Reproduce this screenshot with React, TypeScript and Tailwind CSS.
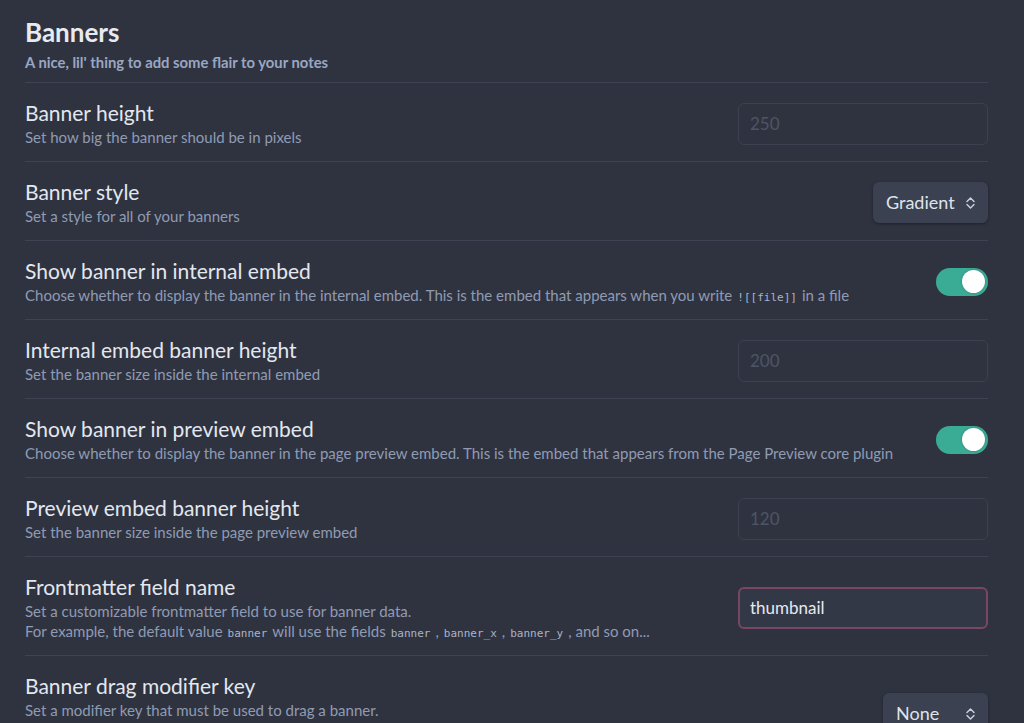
import React from "react";

const font = { fontFamily: "Lato, 'Noto Sans', sans-serif" };

function Code({ children }: { children: React.ReactNode }) {
  return (
    <code className="mx-[5px] text-[11px] leading-[0] align-baseline text-[#a9b4c9]" style={{ fontFamily: "'DejaVu Sans Mono', monospace" }}>
      {children}
    </code>
  );
}

function Row({
  title,
  desc,
  control,
  last,
  align = "center",
}: {
  title: string;
  desc: React.ReactNode;
  control: React.ReactNode;
  last?: boolean;
  align?: "center" | "start";
}) {
  return (
    <div
      className={`flex ${align === "center" ? "items-center" : "items-start"} justify-between pt-[17px] pb-[14px] ${
        last ? "" : "border-b border-[#3d4352]"
      }`}
    >
      <div className="flex flex-col">
        <div className="text-[21px] leading-[26px] text-[#e3e7ef]">{title}</div>
        <div className="text-[15px] leading-[20px] text-[#8f9bb3] mt-[1px]">{desc}</div>
      </div>
      <div className="shrink-0 ml-6">{control}</div>
    </div>
  );
}

function TextInput({ placeholder, value, focused }: { placeholder?: string; value?: string; focused?: boolean }) {
  return (
    <div
      className={`w-[250px] h-[42px] rounded-[6px] flex items-center text-[17px] ${
        focused
          ? "border-2 border-[#7b4566] bg-[#333846] text-[#e6e9ef] px-[10px]"
          : "border border-[#3b4150] text-[#4e5566] px-[11px]"
      }`}
    >
      {value ?? placeholder}
    </div>
  );
}

function Select({ label, w }: { label: string; w: string }) {
  return (
    <div
      className={`${w} h-[41px] rounded-[6px] bg-[#3b4151] shadow-[0_1px_3px_rgba(0,0,0,0.35)] flex items-center justify-between pl-[13px] pr-[12px] text-[18px] text-[#dfe3ea]`}
    >
      <span>{label}</span>
      <svg width="11" height="14" viewBox="0 0 11 14" fill="none" stroke="#c9ced8" strokeWidth="1.5" strokeLinecap="round" strokeLinejoin="round">
        <path d="M2 5.5 L5.5 2 L9 5.5" />
        <path d="M2 8.5 L5.5 12 L9 8.5" />
      </svg>
    </div>
  );
}

function Toggle() {
  return (
    <div className="w-[52px] h-[28px] rounded-full bg-[#3aab95] flex items-center justify-end pr-[3px]">
      <div className="w-[23px] h-[23px] rounded-full bg-white shadow-[0_0_2px_rgba(0,0,0,0.3)]" />
    </div>
  );
}

export default function App() {
  return (
    <div className="w-[1024px] h-[723px] overflow-hidden bg-[#2f3340]" style={font}>
      <div className="pl-[25px] pr-[36px]">
        <div className="pt-[15px] pb-[11px] border-b border-[#3d4352]">
          <div className="text-[26px] leading-[34px] font-bold text-[#e7eaf0]">Banners</div>
          <div className="text-[14.8px] leading-[18px] font-bold text-[#9aa7c2] mt-[4px]">
            A nice, lil' thing to add some flair to your notes
          </div>
        </div>
        <Row title="Banner height" desc="Set how big the banner should be in pixels" control={<TextInput placeholder="250" />} />
        <Row title="Banner style" desc="Set a style for all of your banners" control={<Select label="Gradient" w="w-[115px]" />} />
        <Row
          title="Show banner in internal embed"
          desc={
            <>
              Choose whether to display the banner in the internal embed. This is the embed that appears when you write
              <Code>![[file]]</Code>in a file
            </>
          }
          control={<Toggle />}
        />
        <Row title="Internal embed banner height" desc="Set the banner size inside the internal embed" control={<TextInput placeholder="200" />} />
        <Row
          title="Show banner in preview embed"
          desc="Choose whether to display the banner in the page preview embed. This is the embed that appears from the Page Preview core plugin"
          control={<Toggle />}
        />
        <Row title="Preview embed banner height" desc="Set the banner size inside the page preview embed" control={<TextInput placeholder="120" />} />
        <Row
          title="Frontmatter field name"
          desc={
            <>
              Set a customizable frontmatter field to use for banner data.
              <br />
              For example, the default value<Code>banner</Code>will use the fields<Code>banner</Code>,<Code>banner_x</Code>,
              <Code>banner_y</Code>, and so on...
            </>
          }
          control={<TextInput value="thumbnail" focused />}
        />
        <Row
          title="Banner drag modifier key"
          desc="Set a modifier key that must be used to drag a banner."
          control={<div className="mt-[20px]"><Select label="None" w="w-[105px]" /></div>}
          align="start"
          last
        />
      </div>
    </div>
  );
}
